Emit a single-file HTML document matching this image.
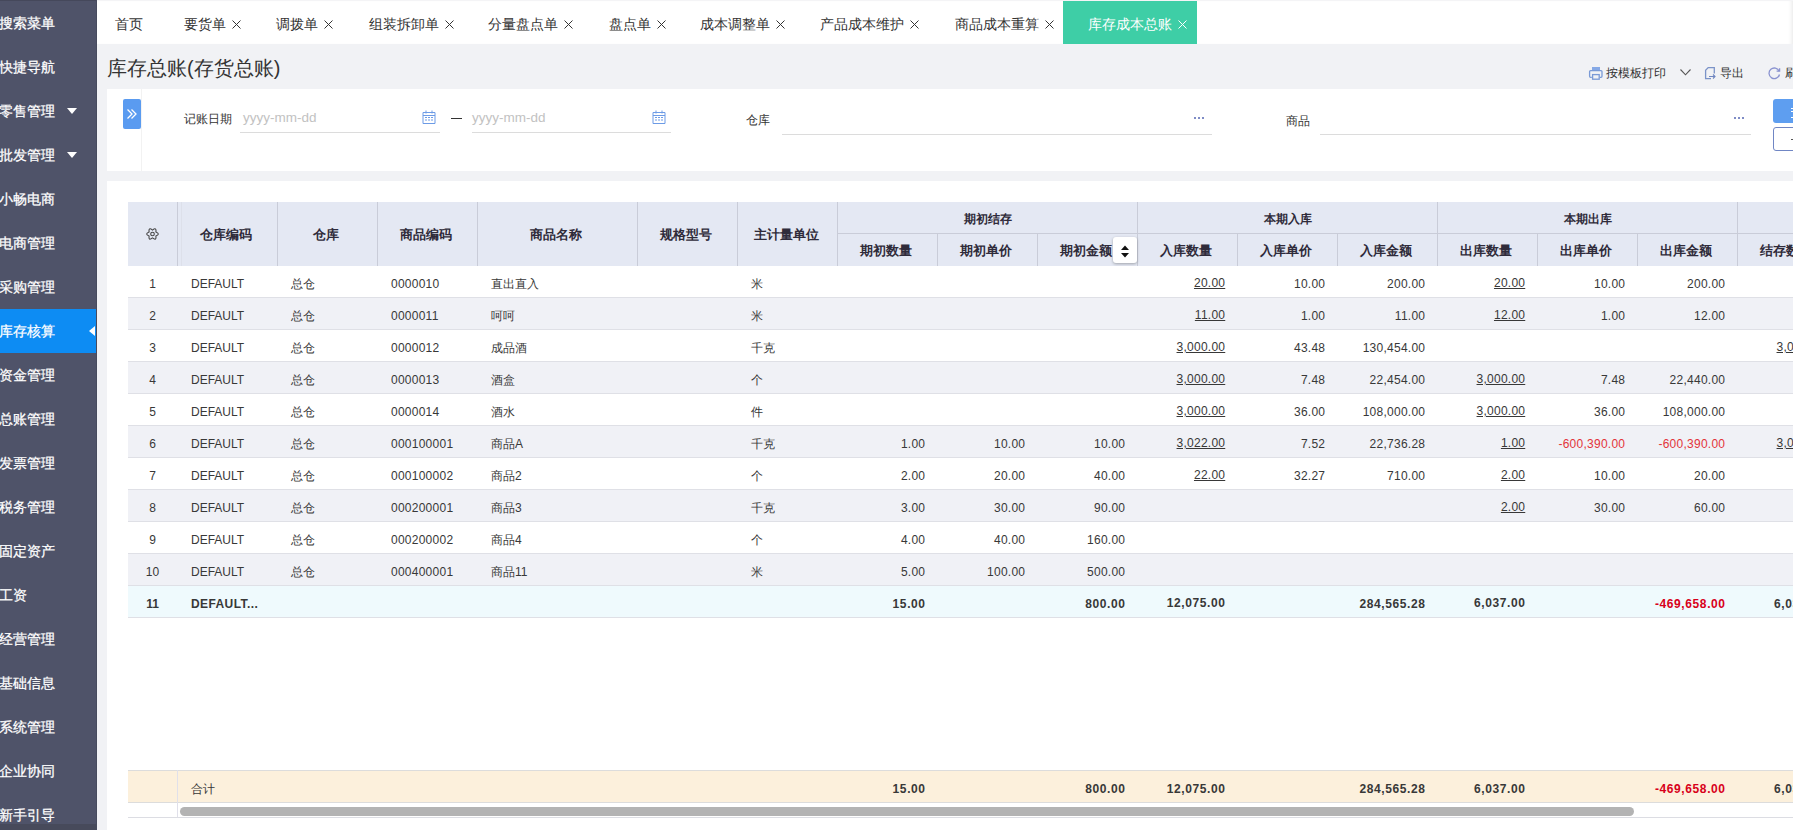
<!DOCTYPE html><html><head><meta charset="utf-8"><style>
*{box-sizing:border-box}
body{margin:0;width:1793px;height:830px;overflow:hidden;position:relative;background:#f1f2f5;font-family:"Liberation Sans",sans-serif;color:#333}
.a{position:absolute;white-space:nowrap}
#side{position:absolute;left:0;top:0;width:97px;height:830px;background:#4f5369;border-right:1px solid #474b5e}
.si{position:absolute;left:-1px;width:97px;height:44px;line-height:44px;font-size:14px;color:#fff;-webkit-text-stroke:0.25px #fff}
.si.act{background:#0d8cf3;color:#fff}
.tri{position:absolute;left:68px;top:19px;width:0;height:0;border-left:5px solid transparent;border-right:5px solid transparent;border-top:6px solid #fff}
.trl{position:absolute;left:90px;top:17px;width:0;height:0;border-top:5px solid transparent;border-bottom:5px solid transparent;border-right:6px solid #fff}
#tabbar{position:absolute;left:97px;top:0;width:1696px;height:44px;background:#fff;border-top:1px solid #f4f4f6;box-shadow:inset -4px 0 4px -3px #e6e6e6}
.tab{position:absolute;top:17px;font-size:14px;line-height:14px;color:#333}
.x{position:absolute;width:9px;height:9px}
#acttab{position:absolute;left:1063px;top:1px;width:134px;height:43px;background:#3ecea6}
.lbl{font-size:12px;color:#333}
.ul{position:absolute;height:1px;background:#dcdcdc}
.th{position:absolute;font-size:12px;font-weight:bold;color:#2f2b3a;text-align:center}
.cell{position:absolute;font-size:12px;color:#383838;height:31px;line-height:31px;white-space:nowrap;padding-top:3px}
.u{text-decoration:underline}
.r{color:#e3343a}
.b.r{color:#d8001a}
.b{font-weight:bold}
</style></head><body>
<div id="side">
<div class="si" style="top:1px">搜索菜单</div>
<div class="si" style="top:45px">快捷导航</div>
<div class="si" style="top:89px">零售管理<div class="tri"></div></div>
<div class="si" style="top:133px">批发管理<div class="tri"></div></div>
<div class="si" style="top:177px">小畅电商</div>
<div class="si" style="top:221px">电商管理</div>
<div class="si" style="top:265px">采购管理</div>
<div class="si act" style="top:309px">库存核算<div class="trl"></div></div>
<div class="si" style="top:353px">资金管理</div>
<div class="si" style="top:397px">总账管理</div>
<div class="si" style="top:441px">发票管理</div>
<div class="si" style="top:485px">税务管理</div>
<div class="si" style="top:529px">固定资产</div>
<div class="si" style="top:573px">工资</div>
<div class="si" style="top:617px">经营管理</div>
<div class="si" style="top:661px">基础信息</div>
<div class="si" style="top:705px">系统管理</div>
<div class="si" style="top:749px">企业协同</div>
<div class="si" style="top:793px">新手引导</div>
<div class="a" style="left:0;top:824px;width:96px;height:6px;background:#474a5b"></div><div class="a" style="left:0;top:0;width:96px;height:1px;background:#45485b"></div>
</div>
<div id="tabbar"></div>
<div id="acttab"></div>
<div class="a tab" style="left:115px">首页</div>
<div class="a tab" style="left:184px">要货单</div>
<svg class="x" style="left:232px;top:20px" viewBox="0 0 9 9"><path d="M0.5 0.5L8.5 8.5M8.5 0.5L0.5 8.5" stroke="#333" stroke-width="1" fill="none"/></svg>
<div class="a tab" style="left:276px">调拨单</div>
<svg class="x" style="left:324px;top:20px" viewBox="0 0 9 9"><path d="M0.5 0.5L8.5 8.5M8.5 0.5L0.5 8.5" stroke="#333" stroke-width="1" fill="none"/></svg>
<div class="a tab" style="left:369px">组装拆卸单</div>
<svg class="x" style="left:445px;top:20px" viewBox="0 0 9 9"><path d="M0.5 0.5L8.5 8.5M8.5 0.5L0.5 8.5" stroke="#333" stroke-width="1" fill="none"/></svg>
<div class="a tab" style="left:488px">分量盘点单</div>
<svg class="x" style="left:564px;top:20px" viewBox="0 0 9 9"><path d="M0.5 0.5L8.5 8.5M8.5 0.5L0.5 8.5" stroke="#333" stroke-width="1" fill="none"/></svg>
<div class="a tab" style="left:609px">盘点单</div>
<svg class="x" style="left:657px;top:20px" viewBox="0 0 9 9"><path d="M0.5 0.5L8.5 8.5M8.5 0.5L0.5 8.5" stroke="#333" stroke-width="1" fill="none"/></svg>
<div class="a tab" style="left:700px">成本调整单</div>
<svg class="x" style="left:776px;top:20px" viewBox="0 0 9 9"><path d="M0.5 0.5L8.5 8.5M8.5 0.5L0.5 8.5" stroke="#333" stroke-width="1" fill="none"/></svg>
<div class="a tab" style="left:820px">产品成本维护</div>
<svg class="x" style="left:910px;top:20px" viewBox="0 0 9 9"><path d="M0.5 0.5L8.5 8.5M8.5 0.5L0.5 8.5" stroke="#333" stroke-width="1" fill="none"/></svg>
<div class="a tab" style="left:955px">商品成本重算</div>
<svg class="x" style="left:1045px;top:20px" viewBox="0 0 9 9"><path d="M0.5 0.5L8.5 8.5M8.5 0.5L0.5 8.5" stroke="#333" stroke-width="1" fill="none"/></svg>
<div class="a tab" style="left:1088px;color:#fff">库存成本总账</div>
<svg class="x" style="left:1178px;top:20px" viewBox="0 0 9 9"><path d="M0.5 0.5L8.5 8.5M8.5 0.5L0.5 8.5" stroke="#fff" stroke-width="1" fill="none"/></svg>
<div class="a" style="left:107px;top:58px;font-size:20px;line-height:20px;color:#333">库存总账(存货总账)</div>
<svg class="a" style="left:1585px;top:62px" width="24" height="22" viewBox="1585 62 24 22"><rect x="1592" y="67" width="8" height="3.2" fill="#86a9e6"/><path d="M1591.8 77.3H1590.6A1 1 0 0 1 1589.6 76.3V71.6A1 1 0 0 1 1590.6 70.6H1601A1 1 0 0 1 1602 71.6V76.3A1 1 0 0 1 1601 77.3H1599.8" stroke="#7a9ad6" stroke-width="1.3" fill="none"/><rect x="1592.6" y="74.6" width="6.6" height="4.6" stroke="#7a9ad6" stroke-width="1.3" fill="none"/></svg>
<div class="a lbl" style="left:1606px;top:67px;line-height:12px">按模板打印</div>
<svg class="a" style="left:1680px;top:69px" width="11" height="7" viewBox="0 0 11 7"><path d="M0.5 0.5L5.5 5.8L10.5 0.5" stroke="#555" stroke-width="1.1" fill="none"/></svg>
<svg class="a" style="left:1700px;top:62px" width="24" height="22" viewBox="1700 62 24 22"><path d="M1714.3 73.6V67.6H1708.2L1705.6 70.2V78.6H1711" stroke="#7b93c8" stroke-width="1.3" fill="none"/><path d="M1709 76.5H1715M1713 74.5L1715 76.5L1713 78.5" stroke="#6f86c0" stroke-width="1.1" fill="none"/></svg>
<div class="a lbl" style="left:1720px;top:67px;line-height:12px">导出</div>
<svg class="a" style="left:1764px;top:62px" width="24" height="22" viewBox="1764 62 24 22"><path d="M1779.2 71.2A5.3 5.3 0 1 0 1779.5 74.5" stroke="#8a93d0" stroke-width="1.3" fill="none"/><path d="M1776.6 71.2H1779.6V68.2" stroke="#8a93d0" stroke-width="1.3" fill="none"/></svg>
<div class="a lbl" style="left:1785px;top:67px;line-height:12px">刷新</div>
<div class="a" style="left:107px;top:89px;width:1686px;height:82px;background:#fff"></div>
<div class="a" style="left:141px;top:89px;width:1px;height:82px;background:#f2f2f2"></div>
<div class="a" style="left:123px;top:99px;width:18px;height:30px;background:#5a9bf0;border-radius:2px"></div>
<svg class="a" style="left:125px;top:107px" width="14" height="14" viewBox="0 0 14 14"><path d="M2.5 2.5L7 7L2.5 11.5M6.5 2.5L11 7L6.5 11.5" stroke="#fff" stroke-width="1.3" fill="none"/></svg>
<div class="a lbl" style="left:184px;top:113px;line-height:12px">记账日期</div>
<div class="a" style="left:243px;top:111px;font-size:13.5px;line-height:13px;color:#c2c2c2">yyyy-mm-dd</div>
<svg class="a" style="left:422px;top:110px" width="14" height="14" viewBox="0 0 14 14"><path d="M1 2.5h12v11H1z M1 5.5h12 M4 0.5v3 M10 0.5v3" stroke="#6c9be6" stroke-width="1" fill="none"/><path d="M3 7.5h2M6 7.5h2M9 7.5h2M3 10h2M6 10h2M9 10h2" stroke="#6c9be6" stroke-width="1"/></svg>
<div class="ul" style="left:240px;top:132px;width:200px"></div>
<div class="a" style="left:451px;top:118px;width:11px;height:1px;background:#333"></div>
<div class="a" style="left:472px;top:111px;font-size:13.5px;line-height:13px;color:#c2c2c2">yyyy-mm-dd</div>
<svg class="a" style="left:652px;top:110px" width="14" height="14" viewBox="0 0 14 14"><path d="M1 2.5h12v11H1z M1 5.5h12 M4 0.5v3 M10 0.5v3" stroke="#6c9be6" stroke-width="1" fill="none"/><path d="M3 7.5h2M6 7.5h2M9 7.5h2M3 10h2M6 10h2M9 10h2" stroke="#6c9be6" stroke-width="1"/></svg>
<div class="ul" style="left:472px;top:132px;width:199px"></div>
<div class="a lbl" style="left:746px;top:114px;line-height:12px">仓库</div>
<div class="ul" style="left:782px;top:134px;width:430px"></div>
<div class="a" style="left:1194px;top:117px;width:2px;height:2px;background:#7f8cc6"></div><div class="a" style="left:1198px;top:117px;width:2px;height:2px;background:#7f8cc6"></div><div class="a" style="left:1202px;top:117px;width:2px;height:2px;background:#7f8cc6"></div>
<div class="a lbl" style="left:1286px;top:115px;line-height:12px">商品</div>
<div class="ul" style="left:1320px;top:134px;width:431px"></div>
<div class="a" style="left:1734px;top:117px;width:2px;height:2px;background:#7f8cc6"></div><div class="a" style="left:1738px;top:117px;width:2px;height:2px;background:#7f8cc6"></div><div class="a" style="left:1742px;top:117px;width:2px;height:2px;background:#7f8cc6"></div>
<div class="a" style="left:1773px;top:99px;width:40px;height:24px;background:#5e9ef0;border-radius:3px"></div>
<div class="a" style="left:1773px;top:127px;width:40px;height:24px;background:#fff;border:1px solid #7086c4;border-radius:3px"></div>
<div class="a" style="left:1791px;top:108px;width:2px;height:1px;background:#fff"></div><div class="a" style="left:1791px;top:111px;width:2px;height:1px;background:#fff"></div><div class="a" style="left:1791px;top:117px;width:2px;height:1px;background:#fff"></div>
<div class="a" style="left:1791px;top:139px;width:2px;height:1px;background:#555"></div>
<div class="a" style="left:107px;top:181px;width:1686px;height:649px;background:#fff"></div>
<div class="a" style="left:128px;top:202px;width:1665px;height:64px;background:#e4e8f3"></div>
<div class="a" style="left:177px;top:202px;width:1px;height:64px;background:#c9ccd8"></div>
<div class="a" style="left:277px;top:202px;width:1px;height:64px;background:#c9ccd8"></div>
<div class="a" style="left:377px;top:202px;width:1px;height:64px;background:#c9ccd8"></div>
<div class="a" style="left:477px;top:202px;width:1px;height:64px;background:#c9ccd8"></div>
<div class="a" style="left:637px;top:202px;width:1px;height:64px;background:#c9ccd8"></div>
<div class="a" style="left:737px;top:202px;width:1px;height:64px;background:#c9ccd8"></div>
<div class="a" style="left:837px;top:202px;width:1px;height:64px;background:#c9ccd8"></div>
<div class="a" style="left:937px;top:234px;width:1px;height:32px;background:#c9ccd8"></div>
<div class="a" style="left:1037px;top:234px;width:1px;height:32px;background:#c9ccd8"></div>
<div class="a" style="left:1137px;top:202px;width:1px;height:64px;background:#c9ccd8"></div>
<div class="a" style="left:1237px;top:234px;width:1px;height:32px;background:#c9ccd8"></div>
<div class="a" style="left:1337px;top:234px;width:1px;height:32px;background:#c9ccd8"></div>
<div class="a" style="left:1437px;top:202px;width:1px;height:64px;background:#c9ccd8"></div>
<div class="a" style="left:1537px;top:234px;width:1px;height:32px;background:#c9ccd8"></div>
<div class="a" style="left:1637px;top:234px;width:1px;height:32px;background:#c9ccd8"></div>
<div class="a" style="left:1737px;top:202px;width:1px;height:64px;background:#c9ccd8"></div>
<div class="a" style="left:837px;top:233px;width:956px;height:1px;background:#c9ccd8"></div>
<div class="a" style="left:181px;top:202px;width:1px;height:64px;background:#dde0ea"></div>
<svg class="a" style="left:146px;top:228px" width="13" height="12" viewBox="0 0 13 12"><path d="M9.88 4.05 Q14.80 6.00 9.88 7.95 Q10.65 13.19 6.50 9.90 Q2.35 13.19 3.12 7.95 Q-1.80 6.00 3.12 4.05 Q2.35 -1.19 6.50 2.10 Q10.65 -1.19 9.88 4.05Z" stroke="#444" stroke-width="1.1" fill="none" stroke-linejoin="round"/><circle cx="6.5" cy="6" r="1.8" stroke="#444" stroke-width="1.1" fill="none"/></svg>
<div class="th a" style="left:176px;top:228px;width:100px;line-height:13px;font-size:13px">仓库编码</div>
<div class="th a" style="left:276px;top:228px;width:100px;line-height:13px;font-size:13px">仓库</div>
<div class="th a" style="left:376px;top:228px;width:100px;line-height:13px;font-size:13px">商品编码</div>
<div class="th a" style="left:476px;top:228px;width:160px;line-height:13px;font-size:13px">商品名称</div>
<div class="th a" style="left:636px;top:228px;width:100px;line-height:13px;font-size:13px">规格型号</div>
<div class="th a" style="left:736px;top:228px;width:100px;line-height:13px;font-size:13px">主计量单位</div>
<div class="th a" style="left:838px;top:213px;width:300px;line-height:12px">期初结存</div>
<div class="th a" style="left:1138px;top:213px;width:300px;line-height:12px">本期入库</div>
<div class="th a" style="left:1438px;top:213px;width:300px;line-height:12px">本期出库</div>
<div class="th a" style="left:1738px;top:213px;width:300px;line-height:12px">结存</div>
<div class="th a" style="left:836px;top:244px;width:100px;line-height:13px;font-size:13px">期初数量</div>
<div class="th a" style="left:936px;top:244px;width:100px;line-height:13px;font-size:13px">期初单价</div>
<div class="th a" style="left:1036px;top:244px;width:100px;line-height:13px;font-size:13px">期初金额</div>
<div class="th a" style="left:1136px;top:244px;width:100px;line-height:13px;font-size:13px">入库数量</div>
<div class="th a" style="left:1236px;top:244px;width:100px;line-height:13px;font-size:13px">入库单价</div>
<div class="th a" style="left:1336px;top:244px;width:100px;line-height:13px;font-size:13px">入库金额</div>
<div class="th a" style="left:1436px;top:244px;width:100px;line-height:13px;font-size:13px">出库数量</div>
<div class="th a" style="left:1536px;top:244px;width:100px;line-height:13px;font-size:13px">出库单价</div>
<div class="th a" style="left:1636px;top:244px;width:100px;line-height:13px;font-size:13px">出库金额</div>
<div class="th a" style="left:1736px;top:244px;width:100px;line-height:13px;font-size:13px">结存数量</div>
<div class="a" style="left:1113px;top:237px;width:24px;height:26px;background:#fff;border-radius:3px;box-shadow:0 1px 3px rgba(0,0,0,0.3)"></div>
<svg class="a" style="left:1120px;top:245px" width="10" height="13" viewBox="0 0 10 13"><path d="M1 5L5 0.5L9 5Z M1 8L5 12.5L9 8Z" fill="#111"/></svg>
<div class="a" style="left:128px;top:266px;width:1665px;height:31px;background:#fff"></div>
<div class="a" style="left:128px;top:297px;width:1665px;height:1px;background:#dfe0e6"></div>
<div class="cell a" style="left:128px;top:266px;width:50px;text-align:center;padding-right:1px">1</div>
<div class="cell a" style="left:191px;top:266px">DEFAULT</div>
<div class="cell a" style="left:291px;top:266px">总仓</div>
<div class="cell a" style="left:391px;top:266px;letter-spacing:0.25px">0000010</div>
<div class="cell a" style="left:491px;top:266px">直出直入</div>
<div class="cell a" style="left:751px;top:266px">米</div>
<div class="cell a u" style="left:1138px;top:265px;width:100px;text-align:right;padding-right:12.75px;letter-spacing:0.25px">20.00</div>
<div class="cell a" style="left:1238px;top:266px;width:100px;text-align:right;padding-right:12.75px;letter-spacing:0.25px">10.00</div>
<div class="cell a" style="left:1338px;top:266px;width:100px;text-align:right;padding-right:12.75px;letter-spacing:0.25px">200.00</div>
<div class="cell a u" style="left:1438px;top:265px;width:100px;text-align:right;padding-right:12.75px;letter-spacing:0.25px">20.00</div>
<div class="cell a" style="left:1538px;top:266px;width:100px;text-align:right;padding-right:12.75px;letter-spacing:0.25px">10.00</div>
<div class="cell a" style="left:1638px;top:266px;width:100px;text-align:right;padding-right:12.75px;letter-spacing:0.25px">200.00</div>
<div class="a" style="left:128px;top:298px;width:1665px;height:31px;background:#f0f1f6"></div>
<div class="a" style="left:128px;top:329px;width:1665px;height:1px;background:#dfe0e6"></div>
<div class="cell a" style="left:128px;top:298px;width:50px;text-align:center;padding-right:1px">2</div>
<div class="cell a" style="left:191px;top:298px">DEFAULT</div>
<div class="cell a" style="left:291px;top:298px">总仓</div>
<div class="cell a" style="left:391px;top:298px;letter-spacing:0.25px">0000011</div>
<div class="cell a" style="left:491px;top:298px">呵呵</div>
<div class="cell a" style="left:751px;top:298px">米</div>
<div class="cell a u" style="left:1138px;top:297px;width:100px;text-align:right;padding-right:12.75px;letter-spacing:0.25px">11.00</div>
<div class="cell a" style="left:1238px;top:298px;width:100px;text-align:right;padding-right:12.75px;letter-spacing:0.25px">1.00</div>
<div class="cell a" style="left:1338px;top:298px;width:100px;text-align:right;padding-right:12.75px;letter-spacing:0.25px">11.00</div>
<div class="cell a u" style="left:1438px;top:297px;width:100px;text-align:right;padding-right:12.75px;letter-spacing:0.25px">12.00</div>
<div class="cell a" style="left:1538px;top:298px;width:100px;text-align:right;padding-right:12.75px;letter-spacing:0.25px">1.00</div>
<div class="cell a" style="left:1638px;top:298px;width:100px;text-align:right;padding-right:12.75px;letter-spacing:0.25px">12.00</div>
<div class="a" style="left:128px;top:330px;width:1665px;height:31px;background:#fff"></div>
<div class="a" style="left:128px;top:361px;width:1665px;height:1px;background:#dfe0e6"></div>
<div class="cell a" style="left:128px;top:330px;width:50px;text-align:center;padding-right:1px">3</div>
<div class="cell a" style="left:191px;top:330px">DEFAULT</div>
<div class="cell a" style="left:291px;top:330px">总仓</div>
<div class="cell a" style="left:391px;top:330px;letter-spacing:0.25px">0000012</div>
<div class="cell a" style="left:491px;top:330px">成品酒</div>
<div class="cell a" style="left:751px;top:330px">千克</div>
<div class="cell a u" style="left:1138px;top:329px;width:100px;text-align:right;padding-right:12.75px;letter-spacing:0.25px">3,000.00</div>
<div class="cell a" style="left:1238px;top:330px;width:100px;text-align:right;padding-right:12.75px;letter-spacing:0.25px">43.48</div>
<div class="cell a" style="left:1338px;top:330px;width:100px;text-align:right;padding-right:12.75px;letter-spacing:0.25px">130,454.00</div>
<div class="cell a u" style="left:1738px;top:329px;width:100px;text-align:right;padding-right:12.75px;letter-spacing:0.25px">3,000.00</div>
<div class="a" style="left:128px;top:362px;width:1665px;height:31px;background:#f0f1f6"></div>
<div class="a" style="left:128px;top:393px;width:1665px;height:1px;background:#dfe0e6"></div>
<div class="cell a" style="left:128px;top:362px;width:50px;text-align:center;padding-right:1px">4</div>
<div class="cell a" style="left:191px;top:362px">DEFAULT</div>
<div class="cell a" style="left:291px;top:362px">总仓</div>
<div class="cell a" style="left:391px;top:362px;letter-spacing:0.25px">0000013</div>
<div class="cell a" style="left:491px;top:362px">酒盒</div>
<div class="cell a" style="left:751px;top:362px">个</div>
<div class="cell a u" style="left:1138px;top:361px;width:100px;text-align:right;padding-right:12.75px;letter-spacing:0.25px">3,000.00</div>
<div class="cell a" style="left:1238px;top:362px;width:100px;text-align:right;padding-right:12.75px;letter-spacing:0.25px">7.48</div>
<div class="cell a" style="left:1338px;top:362px;width:100px;text-align:right;padding-right:12.75px;letter-spacing:0.25px">22,454.00</div>
<div class="cell a u" style="left:1438px;top:361px;width:100px;text-align:right;padding-right:12.75px;letter-spacing:0.25px">3,000.00</div>
<div class="cell a" style="left:1538px;top:362px;width:100px;text-align:right;padding-right:12.75px;letter-spacing:0.25px">7.48</div>
<div class="cell a" style="left:1638px;top:362px;width:100px;text-align:right;padding-right:12.75px;letter-spacing:0.25px">22,440.00</div>
<div class="a" style="left:128px;top:394px;width:1665px;height:31px;background:#fff"></div>
<div class="a" style="left:128px;top:425px;width:1665px;height:1px;background:#dfe0e6"></div>
<div class="cell a" style="left:128px;top:394px;width:50px;text-align:center;padding-right:1px">5</div>
<div class="cell a" style="left:191px;top:394px">DEFAULT</div>
<div class="cell a" style="left:291px;top:394px">总仓</div>
<div class="cell a" style="left:391px;top:394px;letter-spacing:0.25px">0000014</div>
<div class="cell a" style="left:491px;top:394px">酒水</div>
<div class="cell a" style="left:751px;top:394px">件</div>
<div class="cell a u" style="left:1138px;top:393px;width:100px;text-align:right;padding-right:12.75px;letter-spacing:0.25px">3,000.00</div>
<div class="cell a" style="left:1238px;top:394px;width:100px;text-align:right;padding-right:12.75px;letter-spacing:0.25px">36.00</div>
<div class="cell a" style="left:1338px;top:394px;width:100px;text-align:right;padding-right:12.75px;letter-spacing:0.25px">108,000.00</div>
<div class="cell a u" style="left:1438px;top:393px;width:100px;text-align:right;padding-right:12.75px;letter-spacing:0.25px">3,000.00</div>
<div class="cell a" style="left:1538px;top:394px;width:100px;text-align:right;padding-right:12.75px;letter-spacing:0.25px">36.00</div>
<div class="cell a" style="left:1638px;top:394px;width:100px;text-align:right;padding-right:12.75px;letter-spacing:0.25px">108,000.00</div>
<div class="a" style="left:128px;top:426px;width:1665px;height:31px;background:#f0f1f6"></div>
<div class="a" style="left:128px;top:457px;width:1665px;height:1px;background:#dfe0e6"></div>
<div class="cell a" style="left:128px;top:426px;width:50px;text-align:center;padding-right:1px">6</div>
<div class="cell a" style="left:191px;top:426px">DEFAULT</div>
<div class="cell a" style="left:291px;top:426px">总仓</div>
<div class="cell a" style="left:391px;top:426px;letter-spacing:0.25px">000100001</div>
<div class="cell a" style="left:491px;top:426px">商品A</div>
<div class="cell a" style="left:751px;top:426px">千克</div>
<div class="cell a" style="left:838px;top:426px;width:100px;text-align:right;padding-right:12.75px;letter-spacing:0.25px">1.00</div>
<div class="cell a" style="left:938px;top:426px;width:100px;text-align:right;padding-right:12.75px;letter-spacing:0.25px">10.00</div>
<div class="cell a" style="left:1038px;top:426px;width:100px;text-align:right;padding-right:12.75px;letter-spacing:0.25px">10.00</div>
<div class="cell a u" style="left:1138px;top:425px;width:100px;text-align:right;padding-right:12.75px;letter-spacing:0.25px">3,022.00</div>
<div class="cell a" style="left:1238px;top:426px;width:100px;text-align:right;padding-right:12.75px;letter-spacing:0.25px">7.52</div>
<div class="cell a" style="left:1338px;top:426px;width:100px;text-align:right;padding-right:12.75px;letter-spacing:0.25px">22,736.28</div>
<div class="cell a u" style="left:1438px;top:425px;width:100px;text-align:right;padding-right:12.75px;letter-spacing:0.25px">1.00</div>
<div class="cell a r" style="left:1538px;top:426px;width:100px;text-align:right;padding-right:12.75px;letter-spacing:0.25px">-600,390.00</div>
<div class="cell a r" style="left:1638px;top:426px;width:100px;text-align:right;padding-right:12.75px;letter-spacing:0.25px">-600,390.00</div>
<div class="cell a u" style="left:1738px;top:425px;width:100px;text-align:right;padding-right:12.75px;letter-spacing:0.25px">3,000.00</div>
<div class="a" style="left:128px;top:458px;width:1665px;height:31px;background:#fff"></div>
<div class="a" style="left:128px;top:489px;width:1665px;height:1px;background:#dfe0e6"></div>
<div class="cell a" style="left:128px;top:458px;width:50px;text-align:center;padding-right:1px">7</div>
<div class="cell a" style="left:191px;top:458px">DEFAULT</div>
<div class="cell a" style="left:291px;top:458px">总仓</div>
<div class="cell a" style="left:391px;top:458px;letter-spacing:0.25px">000100002</div>
<div class="cell a" style="left:491px;top:458px">商品2</div>
<div class="cell a" style="left:751px;top:458px">个</div>
<div class="cell a" style="left:838px;top:458px;width:100px;text-align:right;padding-right:12.75px;letter-spacing:0.25px">2.00</div>
<div class="cell a" style="left:938px;top:458px;width:100px;text-align:right;padding-right:12.75px;letter-spacing:0.25px">20.00</div>
<div class="cell a" style="left:1038px;top:458px;width:100px;text-align:right;padding-right:12.75px;letter-spacing:0.25px">40.00</div>
<div class="cell a u" style="left:1138px;top:457px;width:100px;text-align:right;padding-right:12.75px;letter-spacing:0.25px">22.00</div>
<div class="cell a" style="left:1238px;top:458px;width:100px;text-align:right;padding-right:12.75px;letter-spacing:0.25px">32.27</div>
<div class="cell a" style="left:1338px;top:458px;width:100px;text-align:right;padding-right:12.75px;letter-spacing:0.25px">710.00</div>
<div class="cell a u" style="left:1438px;top:457px;width:100px;text-align:right;padding-right:12.75px;letter-spacing:0.25px">2.00</div>
<div class="cell a" style="left:1538px;top:458px;width:100px;text-align:right;padding-right:12.75px;letter-spacing:0.25px">10.00</div>
<div class="cell a" style="left:1638px;top:458px;width:100px;text-align:right;padding-right:12.75px;letter-spacing:0.25px">20.00</div>
<div class="a" style="left:128px;top:490px;width:1665px;height:31px;background:#f0f1f6"></div>
<div class="a" style="left:128px;top:521px;width:1665px;height:1px;background:#dfe0e6"></div>
<div class="cell a" style="left:128px;top:490px;width:50px;text-align:center;padding-right:1px">8</div>
<div class="cell a" style="left:191px;top:490px">DEFAULT</div>
<div class="cell a" style="left:291px;top:490px">总仓</div>
<div class="cell a" style="left:391px;top:490px;letter-spacing:0.25px">000200001</div>
<div class="cell a" style="left:491px;top:490px">商品3</div>
<div class="cell a" style="left:751px;top:490px">千克</div>
<div class="cell a" style="left:838px;top:490px;width:100px;text-align:right;padding-right:12.75px;letter-spacing:0.25px">3.00</div>
<div class="cell a" style="left:938px;top:490px;width:100px;text-align:right;padding-right:12.75px;letter-spacing:0.25px">30.00</div>
<div class="cell a" style="left:1038px;top:490px;width:100px;text-align:right;padding-right:12.75px;letter-spacing:0.25px">90.00</div>
<div class="cell a u" style="left:1438px;top:489px;width:100px;text-align:right;padding-right:12.75px;letter-spacing:0.25px">2.00</div>
<div class="cell a" style="left:1538px;top:490px;width:100px;text-align:right;padding-right:12.75px;letter-spacing:0.25px">30.00</div>
<div class="cell a" style="left:1638px;top:490px;width:100px;text-align:right;padding-right:12.75px;letter-spacing:0.25px">60.00</div>
<div class="a" style="left:128px;top:522px;width:1665px;height:31px;background:#fff"></div>
<div class="a" style="left:128px;top:553px;width:1665px;height:1px;background:#dfe0e6"></div>
<div class="cell a" style="left:128px;top:522px;width:50px;text-align:center;padding-right:1px">9</div>
<div class="cell a" style="left:191px;top:522px">DEFAULT</div>
<div class="cell a" style="left:291px;top:522px">总仓</div>
<div class="cell a" style="left:391px;top:522px;letter-spacing:0.25px">000200002</div>
<div class="cell a" style="left:491px;top:522px">商品4</div>
<div class="cell a" style="left:751px;top:522px">个</div>
<div class="cell a" style="left:838px;top:522px;width:100px;text-align:right;padding-right:12.75px;letter-spacing:0.25px">4.00</div>
<div class="cell a" style="left:938px;top:522px;width:100px;text-align:right;padding-right:12.75px;letter-spacing:0.25px">40.00</div>
<div class="cell a" style="left:1038px;top:522px;width:100px;text-align:right;padding-right:12.75px;letter-spacing:0.25px">160.00</div>
<div class="a" style="left:128px;top:554px;width:1665px;height:31px;background:#f0f1f6"></div>
<div class="a" style="left:128px;top:585px;width:1665px;height:1px;background:#dfe0e6"></div>
<div class="cell a" style="left:128px;top:554px;width:50px;text-align:center;padding-right:1px">10</div>
<div class="cell a" style="left:191px;top:554px">DEFAULT</div>
<div class="cell a" style="left:291px;top:554px">总仓</div>
<div class="cell a" style="left:391px;top:554px;letter-spacing:0.25px">000400001</div>
<div class="cell a" style="left:491px;top:554px">商品11</div>
<div class="cell a" style="left:751px;top:554px">米</div>
<div class="cell a" style="left:838px;top:554px;width:100px;text-align:right;padding-right:12.75px;letter-spacing:0.25px">5.00</div>
<div class="cell a" style="left:938px;top:554px;width:100px;text-align:right;padding-right:12.75px;letter-spacing:0.25px">100.00</div>
<div class="cell a" style="left:1038px;top:554px;width:100px;text-align:right;padding-right:12.75px;letter-spacing:0.25px">500.00</div>
<div class="a" style="left:128px;top:586px;width:1665px;height:31px;background:#effafd"></div>
<div class="a" style="left:128px;top:617px;width:1665px;height:1px;background:#dfe0e6"></div>
<div class="cell a b" style="left:128px;top:586px;width:50px;text-align:center;padding-right:1px">11</div>
<div class="cell a b" style="left:191px;top:586px;letter-spacing:0.4px">DEFAULT...</div>
<div class="cell a b" style="left:838px;top:586px;width:100px;text-align:right;padding-right:12.4px;letter-spacing:0.6px">15.00</div>
<div class="cell a b" style="left:1038px;top:586px;width:100px;text-align:right;padding-right:12.4px;letter-spacing:0.6px">800.00</div>
<div class="cell a b" style="left:1138px;top:585px;width:100px;text-align:right;padding-right:12.4px;letter-spacing:0.6px">12,075.00</div>
<div class="cell a b" style="left:1338px;top:586px;width:100px;text-align:right;padding-right:12.4px;letter-spacing:0.6px">284,565.28</div>
<div class="cell a b" style="left:1438px;top:585px;width:100px;text-align:right;padding-right:12.4px;letter-spacing:0.6px">6,037.00</div>
<div class="cell a b r" style="left:1638px;top:586px;width:100px;text-align:right;padding-right:12.4px;letter-spacing:0.6px">-469,658.00</div>
<div class="cell a b" style="left:1738px;top:586px;width:100px;text-align:right;padding-right:12.4px;letter-spacing:0.6px">6,037.00</div>
<div class="a" style="left:128px;top:770px;width:1665px;height:1px;background:#dcdcdc"></div>
<div class="a" style="left:128px;top:771px;width:1665px;height:32px;background:#fcf0dc"></div>
<div class="a" style="left:128px;top:802px;width:1665px;height:1px;background:#dcdcdc"></div>
<div class="a" style="left:177px;top:770px;width:1px;height:47px;background:#e0e0ea"></div>
<div class="cell a" style="left:191px;top:771px">合计</div>
<div class="cell a b" style="left:838px;top:771px;width:100px;text-align:right;padding-right:12.4px;letter-spacing:0.6px">15.00</div>
<div class="cell a b" style="left:1038px;top:771px;width:100px;text-align:right;padding-right:12.4px;letter-spacing:0.6px">800.00</div>
<div class="cell a b" style="left:1138px;top:771px;width:100px;text-align:right;padding-right:12.4px;letter-spacing:0.6px">12,075.00</div>
<div class="cell a b" style="left:1338px;top:771px;width:100px;text-align:right;padding-right:12.4px;letter-spacing:0.6px">284,565.28</div>
<div class="cell a b" style="left:1438px;top:771px;width:100px;text-align:right;padding-right:12.4px;letter-spacing:0.6px">6,037.00</div>
<div class="cell a b r" style="left:1638px;top:771px;width:100px;text-align:right;padding-right:12.4px;letter-spacing:0.6px">-469,658.00</div>
<div class="cell a b" style="left:1738px;top:771px;width:100px;text-align:right;padding-right:12.4px;letter-spacing:0.6px">6,037.00</div>
<div class="a" style="left:180px;top:807px;width:1454px;height:9px;border-radius:4.5px;background:#b3b3b3"></div>
<div class="a" style="left:128px;top:817px;width:1665px;height:1px;background:#dcdde3"></div>
</body></html>
